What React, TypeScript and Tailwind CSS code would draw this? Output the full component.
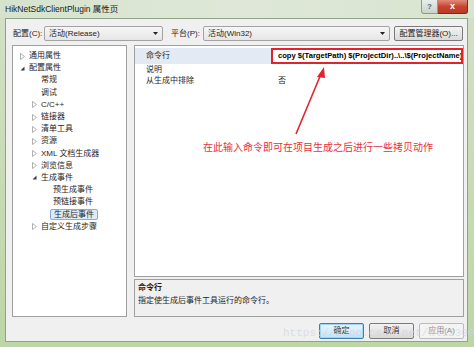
import React from "react";

type TreeItem = {
  label: string;
  level: number;
  arrow?: "closed" | "open";
  selected?: boolean;
};

const treeItems: TreeItem[] = [
  { label: "通用属性", level: 0, arrow: "closed" },
  { label: "配置属性", level: 0, arrow: "open" },
  { label: "常规", level: 1 },
  { label: "调试", level: 1 },
  { label: "C/C++", level: 1, arrow: "closed" },
  { label: "链接器", level: 1, arrow: "closed" },
  { label: "清单工具", level: 1, arrow: "closed" },
  { label: "资源", level: 1, arrow: "closed" },
  { label: "XML 文档生成器", level: 1, arrow: "closed" },
  { label: "浏览信息", level: 1, arrow: "closed" },
  { label: "生成事件", level: 1, arrow: "open" },
  { label: "预生成事件", level: 2 },
  { label: "预链接事件", level: 2 },
  { label: "生成后事件", level: 2, selected: true },
  { label: "自定义生成步骤", level: 1, arrow: "closed" },
];

const indent = ["pl-[7px]", "pl-[19px]", "pl-[31px]"];

const Arrow = ({ kind }: { kind?: "closed" | "open" }) => {
  if (!kind) return <span className="w-[9px] shrink-0" />;
  return (
    <span className="w-[9px] shrink-0 flex items-center">
      {kind === "closed" ? (
        <svg width="5" height="7" viewBox="0 0 5 7">
          <path d="M0.5 0.5 L4.5 3.5 L0.5 6.5 Z" fill="white" stroke="#a6a6a6" strokeWidth="0.9" />
        </svg>
      ) : (
        <svg width="5" height="5" viewBox="0 0 5 5">
          <path d="M4.5 0.5 L4.5 4.5 L0.5 4.5 Z" fill="#3c3c3c" />
        </svg>
      )}
    </span>
  );
};

const Combo = ({ text, width }: { text: string; width: string }) => (
  <div
    className={`${width} h-[15px] shrink-0 flex items-center justify-between rounded-[2px] border border-[#a3a3a3] bg-gradient-to-b from-[#f6f6f6] to-[#e6e6e6] pl-[4px] pr-[4px]`}
  >
    <span className="whitespace-nowrap">{text}</span>
    <svg width="5" height="3" viewBox="0 0 5 3">
      <path d="M0 0 L5 0 L2.5 3 Z" fill="#222" />
    </svg>
  </div>
);

const Btn = ({ text, kind }: { text: string; kind?: "default" | "disabled" }) => {
  const cls =
    kind === "default"
      ? "border-[#3c7fb1] from-[#eaf6fd] to-[#bfe3f7] shadow-[inset_0_0_0_1px_#9fd6f5]"
      : kind === "disabled"
      ? "border-[#b8bcbf] from-[#f4f4f4] to-[#f4f4f4] text-[#8a8a8a]"
      : "border-[#7a7a7a] from-[#f2f2f2] to-[#d9d9d9]";
  return (
    <div
      className={`w-[45px] h-[16px] flex items-center justify-center rounded-[2px] border bg-gradient-to-b ${cls}`}
    >
      {text}
    </div>
  );
};

export default function App() {
  return (
    <div className="relative w-[474px] h-[347px] overflow-hidden bg-gradient-to-b from-[#d3e1c6] to-[#bcd6a6] text-[8px] leading-none text-[#1e1e1e] font-[family-name:'Liberation_Sans','Noto_Sans_CJK_SC',sans-serif] flex flex-col">
      {/* title bar */}
      <div className="h-[18px] shrink-0 flex items-start justify-between bg-gradient-to-r from-[#d6e3cc] via-[#dfe8d8] to-[#d9e4d0]">
        <span className="pl-[5px] pt-[5px] text-[8.5px] text-[#1a1a1a]">HikNetSdkClientPlugin 属性页</span>
        <div className="flex mr-[6px]">
          <div className="w-[17px] h-[14px] flex items-center justify-center rounded-bl-[3px] border border-t-0 border-[#8f9c90] bg-gradient-to-b from-[#e9eeea] to-[#c9d3cc] text-[8px] font-bold text-[#5a6470]">
            ?
          </div>
          <div className="w-[30px] h-[14px] flex items-center justify-center rounded-br-[3px] border border-t-0 border-l-0 border-[#7c2a20] bg-gradient-to-b from-[#e08a7c] via-[#c9432f] to-[#b83a28] text-[9px] font-bold text-white">
            x
          </div>
        </div>
      </div>

      {/* body */}
      <div className="ml-[5px] w-[463px] h-[324px] shrink-0 border border-[#8fa487] bg-[#f0f0f0] pl-[6px] pr-[3px] pt-[7px] flex flex-col">
        {/* config row */}
        <div className="h-[15px] flex items-center whitespace-nowrap">
          <span className="w-[32px] shrink-0 pl-[1px]">配置(C):</span>
          <Combo text="活动(Release)" width="w-[119px]" />
          <span className="ml-[8px] w-[32px] shrink-0">平台(P):</span>
          <Combo text="活动(Win32)" width="w-[187px]" />
          <div className="ml-[4px] w-[69px] shrink-0 h-[15px] flex items-center justify-center rounded-[2px] border border-[#7a7a7a] bg-gradient-to-b from-[#f3f3f3] to-[#dadada]">
            配置管理器(O)...
          </div>
        </div>

        {/* main */}
        <div className="mt-[4px] h-[272px] flex gap-[7px]">
          {/* tree */}
          <div className="w-[115px] shrink-0 bg-white border border-[#a0a0a0] pt-[4px]">
            {treeItems.map((it) => (
              <div key={it.label} className={`h-[12.2px] flex items-center whitespace-nowrap ${indent[it.level]}`}>
                <Arrow kind={it.arrow} />
                <span
                  className={
                    it.selected
                      ? "-ml-[3px] px-[3px] h-[11px] flex items-center rounded-[2px] border border-[#84acdd] bg-[#dcebfc]"
                      : ""
                  }
                >
                  {it.label}
                </span>
              </div>
            ))}
          </div>

          {/* right side */}
          <div className="flex-1 min-w-0 flex flex-col gap-[2px]">
            <div className="flex-1 bg-white border border-[#a0a0a0] pt-[2px]">
              <div className="flex h-[16px]">
                <div className="w-[136px] shrink-0 pl-[11px] flex items-center bg-[#e4eaf3]">命令行</div>
                <div className="flex-1 min-w-0 flex items-center border-2 border-[#e3232b] pl-[5px] overflow-hidden whitespace-nowrap font-bold text-[7.6px] text-black">
                  copy $(TargetPath) $(ProjectDir)..\..\$(ProjectName)\bin\
                </div>
              </div>
              <div className="flex h-[11px] items-center">
                <div className="w-[136px] pl-[11px]">说明</div>
                <div className="flex-1" />
              </div>
              <div className="flex h-[12px] items-center">
                <div className="w-[136px] pl-[11px]">从生成中排除</div>
                <div className="flex-1 pl-[7px]">否</div>
              </div>
            </div>
            <div className="h-[38px] bg-[#f0f0f0] border border-[#a0a0a0] px-[3px] pt-[4px]">
              <div className="font-bold">命令行</div>
              <div className="mt-[5px]">指定使生成后事件工具运行的命令行。</div>
            </div>
          </div>
        </div>

        {/* buttons */}
        <div className="mt-[6px] flex justify-end gap-[5px]">
          <Btn text="确定" kind="default" />
          <Btn text="取消" />
          <Btn text="应用(A)" kind="disabled" />
        </div>
      </div>

      {/* annotation overlay */}
      <svg className="absolute left-0 top-0 pointer-events-none" width="474" height="347">
        <line x1="296" y1="134" x2="321" y2="74" stroke="#e3232b" strokeWidth="1.6" />
        <path d="M324 67 L317 77 L325 78 Z" fill="#e3232b" />
      </svg>
      <span className="absolute left-[203px] top-[143px] text-[10px] text-[#e8303a] whitespace-nowrap">
        在此输入命令即可在项目生成之后进行一些拷贝动作
      </span>
      <span className="absolute left-[283px] top-[328px] text-[11px] text-[#cfd5dc]/70 whitespace-nowrap font-[family-name:'Liberation_Mono',monospace]">
        https://blog.csdn.net/kl12300
      </span>
    </div>
  );
}
